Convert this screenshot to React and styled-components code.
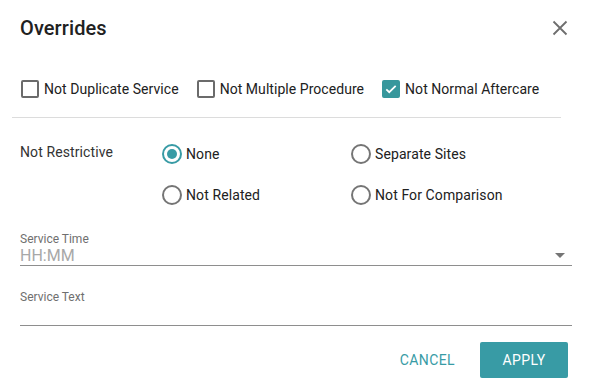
import styled, { createGlobalStyle } from 'styled-components'
import { useState } from 'react'

const GlobalStyle = createGlobalStyle`
	body {
		margin: 0;
		background: #ffffff;
		font-family: Roboto, 'Liberation Sans', sans-serif;
		color: #212121;
	}
`

const TEAL = '#389ba5'

const Dialog = styled.div`
	width: 592px;
	height: 390px;
	box-sizing: border-box;
	display: flex;
	flex-direction: column;
`
const Header = styled.div`
	height: 56px;
	display: flex;
	align-items: center;
	justify-content: space-between;
	padding: 0 22px 0 20px;
`
const Title = styled.h2`
	margin: 0;
	font-size: 20px;
	font-weight: 500;
	line-height: 24px;
	letter-spacing: 0.1px;
	color: #212121;
`
const CloseButton = styled.button`
	width: 20px;
	height: 20px;
	padding: 0;
	border: none;
	background: none;
	cursor: pointer;
	display: flex;
	align-items: center;
	justify-content: center;
`
const CheckRow = styled.div`
	margin-top: 22px;
	padding-left: 21px;
	display: flex;
	align-items: center;
	gap: 18px;
	height: 22px;
`
const CheckLabel = styled.label`
	display: flex;
	align-items: center;
	gap: 5px;
	font-size: 14px;
	letter-spacing: 0.05px;
	color: #212121;
	cursor: pointer;
`
const Box = styled.span`
	width: 18px;
	height: 18px;
	box-sizing: border-box;
	border-radius: 2px;
	border: 2px solid ${(p) => (p.checked ? '#37979c' : '#6b6b6b')};
	background: ${(p) => (p.checked ? '#37979c' : 'transparent')};
	display: flex;
	align-items: center;
	justify-content: center;
`
const Divider = styled.hr`
	margin: 17px 0 0 12px;
	width: 549px;
	border: none;
	border-top: 1px solid #dcdcdc;
`
const RadioSection = styled.div`
	display: grid;
	grid-template-columns: 142px 189px 189px;
	grid-auto-rows: 24px;
	row-gap: 17px;
	padding: 24px 0 0 20px;
`
const SectionLabel = styled.div`
	font-size: 14px;
	letter-spacing: 0.1px;
	color: #333333;
	line-height: 20px;
`
const RadioLabel = styled.label`
	display: flex;
	align-items: center;
	gap: 4px;
	font-size: 14px;
	letter-spacing: 0.1px;
	color: #212121;
	cursor: pointer;
`
const Circle = styled.span`
	width: 20px;
	height: 20px;
	box-sizing: border-box;
	border-radius: 50%;
	border: 2px solid ${(p) => (p.checked ? TEAL : '#757575')};
	display: flex;
	align-items: center;
	justify-content: center;
	&::after {
		content: '';
		width: 10px;
		height: 10px;
		border-radius: 50%;
		background: ${(p) => (p.checked ? TEAL : 'transparent')};
	}
`
const Field = styled.div`
	margin: ${(p) => p.top}px 20px 0 20px;
	border-bottom: 1px solid #8e8e8e;
	display: flex;
	flex-direction: column;
`
const FieldLabel = styled.div`
	font-size: 12px;
	line-height: 14px;
	color: #6f6f6f;
`
const FieldValue = styled.div`
	height: 19px;
	display: flex;
	align-items: center;
	justify-content: space-between;
	font-size: 16px;
	color: #a8a8a8;
	padding-right: 7px;
`
const TextInput = styled.input`
	height: 21px;
	border: none;
	outline: none;
	padding: 0;
	font-family: inherit;
	font-size: 16px;
	background: transparent;
`
const Actions = styled.div`
	margin-top: 16px;
	padding-right: 24px;
	display: flex;
	justify-content: flex-end;
	gap: 9px;
`
const Button = styled.button`
	height: 36px;
	padding: 0 ${(p) => (p.primary ? 22 : 16)}px;
	min-width: ${(p) => (p.primary ? 88 : 0)}px;
	border: none;
	border-radius: 2px;
	font-family: inherit;
	font-size: 14px;
	letter-spacing: 0.4px;
	text-transform: uppercase;
	background: ${(p) => (p.primary ? TEAL : 'transparent')};
	color: ${(p) => (p.primary ? '#ffffff' : TEAL)};
	cursor: pointer;
`

const Check = ({ label, checked, onToggle }) => (
	<CheckLabel onClick={onToggle}>
		<Box checked={checked}>
			{checked && (
				<svg width="14" height="14" viewBox="0 0 24 24">
					<path d="M4 12.5l5 5L20 6.5" fill="none" stroke="#fff" strokeWidth="3" />
				</svg>
			)}
		</Box>
		{label}
	</CheckLabel>
)

const Radio = ({ label, checked, onSelect }) => (
	<RadioLabel onClick={onSelect}>
		<Circle checked={checked} />
		{label}
	</RadioLabel>
)

const App = () => {
	const [checks, setChecks] = useState({
		dup: false,
		multi: false,
		after: true,
	})
	const [restrict, setRestrict] = useState('none')
	const toggle = (k) => setChecks({ ...checks, [k]: !checks[k] })

	return (
		<Dialog>
			<GlobalStyle />
			<Header>
				<Title>Overrides</Title>
				<CloseButton aria-label="close">
					<svg width="16" height="16" viewBox="0 0 16 16">
						<path d="M1.5 1.5l13 13M14.5 1.5l-13 13" stroke="#6e6e6e" strokeWidth="1.8" />
					</svg>
				</CloseButton>
			</Header>
			<CheckRow>
				<Check label="Not Duplicate Service" checked={checks.dup} onToggle={() => toggle('dup')} />
				<Check label="Not Multiple Procedure" checked={checks.multi} onToggle={() => toggle('multi')} />
				<Check label="Not Normal Aftercare" checked={checks.after} onToggle={() => toggle('after')} />
			</CheckRow>
			<Divider />
			<RadioSection>
				<SectionLabel>Not Restrictive</SectionLabel>
				<Radio label="None" checked={restrict === 'none'} onSelect={() => setRestrict('none')} />
				<Radio label="Separate Sites" checked={restrict === 'sites'} onSelect={() => setRestrict('sites')} />
				<div />
				<Radio label="Not Related" checked={restrict === 'related'} onSelect={() => setRestrict('related')} />
				<Radio label="Not For Comparison" checked={restrict === 'comp'} onSelect={() => setRestrict('comp')} />
			</RadioSection>
			<Field top={25}>
				<FieldLabel>Service Time</FieldLabel>
				<FieldValue>
					HH:MM
					<svg width="10" height="5" viewBox="0 0 10 5">
						<path d="M0 0h10L5 5z" fill="#757575" />
					</svg>
				</FieldValue>
			</Field>
			<Field top={24}>
				<FieldLabel>Service Text</FieldLabel>
				<TextInput />
			</Field>
			<Actions>
				<Button>Cancel</Button>
				<Button primary>Apply</Button>
			</Actions>
		</Dialog>
	)
}

export default App
